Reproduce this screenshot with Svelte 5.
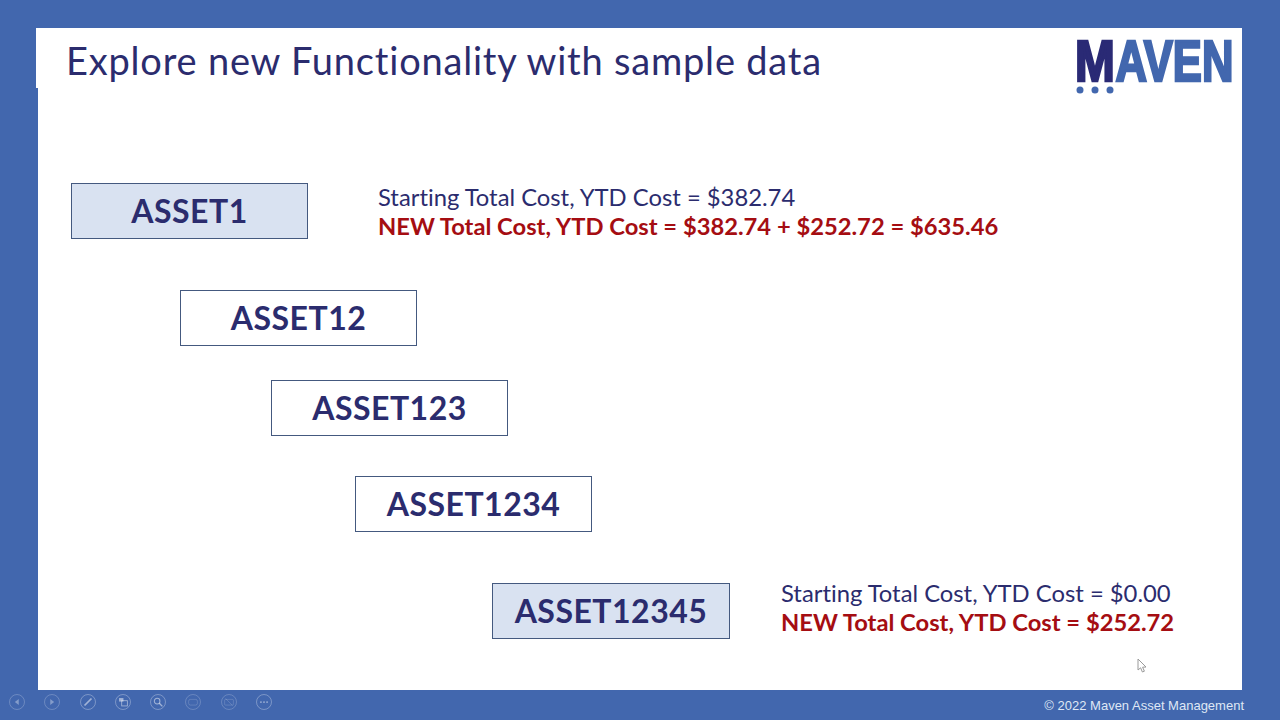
<script>
	const assets = [
		{ name: 'ASSET1', cls: 'first', filled: true, start: 'Starting Total Cost, YTD Cost = $382.74', next: 'NEW Total Cost, YTD Cost = $382.74 + $252.72 = $635.46' },
		{ name: 'ASSET12', cls: 'second' },
		{ name: 'ASSET123', cls: 'third' },
		{ name: 'ASSET1234', cls: 'fourth' },
		{ name: 'ASSET12345', cls: 'fifth', filled: true, start: 'Starting Total Cost, YTD Cost = $0.00', next: 'NEW Total Cost, YTD Cost = $252.72' }
	]
</script>

<main class="page">
	<section class="slide">
		<header class="head">
			<h1>Explore new Functionality with sample data</h1>
			<svg class="logo" viewBox="0 0 158 80" width="158" height="80" role="img" aria-label="Maven">
				<text class="logo-m" transform="translate(-1 63.7) scale(0.84 1)">M</text>
				<text class="logo-rest" transform="translate(39.5 63.7) scale(0.765 1)">AVEN</text>
				<circle cx="4" cy="73" r="3.5" />
				<circle cx="19" cy="73" r="3.5" />
				<circle cx="34" cy="73" r="3.5" />
			</svg>
		</header>

		<div class="rows">
			{#each assets as a}
				<div class="row {a.cls}">
					<div class="box" class:filled={a.filled}>{a.name}</div>
					{#if a.start}
						<div class="notes">
							<p>{a.start}</p>
							<p class="new">{a.next}</p>
						</div>
					{/if}
				</div>
			{/each}
		</div>

		<svg class="cursor" width="12" height="16" viewBox="0 0 12 16">
			<path d="M1 1 L1 12 L3.6 9.8 L5.4 14 L7.4 13.2 L5.6 9.2 L9 9 Z" fill="#fff" stroke="#9a9a9a" />
		</svg>
	</section>

	<footer class="foot">
		<div class="tools">
			<span class="tool dim"><svg viewBox="0 0 16 16"><path d="M10 4.5 L5.5 8 L10 11.5 Z" fill="currentColor" /></svg></span>
			<span class="tool dim"><svg viewBox="0 0 16 16"><path d="M6 4.5 L10.5 8 L6 11.5 Z" fill="currentColor" /></svg></span>
			<span class="tool"><svg viewBox="0 0 16 16"><path d="M4 12 L12 4" stroke="currentColor" stroke-width="2" /></svg></span>
			<span class="tool"><svg viewBox="0 0 16 16"><rect x="3.5" y="3.5" width="5" height="4" fill="currentColor" /><rect x="6.5" y="6.5" width="6.5" height="6" fill="none" stroke="currentColor" /></svg></span>
			<span class="tool"><svg viewBox="0 0 16 16"><circle cx="7" cy="7" r="3.2" fill="none" stroke="currentColor" stroke-width="1.2" /><path d="M9.5 9.5 L13 13" stroke="currentColor" stroke-width="1.6" /></svg></span>
			<span class="tool faint"><svg viewBox="0 0 16 16"><rect x="3" y="5" width="10" height="6.5" rx="2" fill="none" stroke="currentColor" /></svg></span>
			<span class="tool faint"><svg viewBox="0 0 16 16"><rect x="3" y="5" width="10" height="6.5" rx="1" fill="none" stroke="currentColor" /><path d="M4 4 L12 12" stroke="currentColor" /></svg></span>
			<span class="tool"><svg viewBox="0 0 16 16"><circle cx="4.5" cy="8" r="1" fill="currentColor" /><circle cx="8" cy="8" r="1" fill="currentColor" /><circle cx="11.5" cy="8" r="1" fill="currentColor" /></svg></span>
		</div>
		<div class="copy">© 2022 Maven Asset Management</div>
	</footer>
</main>

<style>
	:global(body) {
		margin: 0;
		background: #4267ae;
	}

	.page {
		width: 1280px;
		height: 720px;
		box-sizing: border-box;
		padding-top: 28px;
		display: flex;
		flex-direction: column;
		overflow: hidden;
		background: #4267ae;
		font-family: Lato, "Liberation Sans", sans-serif;
		font-variant-ligatures: none;
	}

	.slide {
		position: relative;
		box-sizing: border-box;
		width: 1204px;
		height: 662px;
		margin-left: 38px;
		background: #fff;
	}

	.head {
		display: flex;
		justify-content: space-between;
		height: 60px;
		margin-left: -2px;
		background: #fff;
		padding-left: 30px;
		padding-right: 8px;
	}

	h1 {
		margin: 0;
		padding-top: 10px;
		font-size: 38px;
		font-weight: 400;
		line-height: 44px;
		color: #2b2c6e;
		letter-spacing: 0.8px;
	}

	.logo {
		margin-top: -11px;
	}

	.logo text {
		font-family: "Liberation Sans", sans-serif;
		font-weight: 700;
		font-size: 57px;
		stroke-width: 2.6px;
	}

	.logo-m {
		fill: #2a2a75;
		stroke: #2a2a75;
	}

	.logo-rest {
		fill: #4267ae;
		stroke: #4267ae;
	}

	.logo circle {
		fill: #4267ae;
	}

	.rows {
		padding-top: 95px;
		display: flex;
		flex-direction: column;
	}

	.row {
		display: flex;
		align-items: center;
		gap: 70px;
		height: 56px;
	}

	.first { margin-left: 33px; }
	.second { margin-left: 142px; margin-top: 51px; }
	.third { margin-left: 233px; margin-top: 34px; }
	.fourth { margin-left: 317px; margin-top: 40px; }
	.fifth { margin-left: 454px; margin-top: 51px; gap: 51px; }

	.first .notes {
		margin-top: 1px;
	}

	.fifth .notes {
		margin-bottom: 7px;
	}

	.fifth .box {
		width: 238px;
	}

	.box {
		box-sizing: border-box;
		width: 237px;
		height: 56px;
		padding-bottom: 1px;
		display: flex;
		align-items: center;
		justify-content: center;
		border: 1px solid #44597f;
		font-size: 32px;
		font-weight: 700;
		color: #2b2c6e;
		letter-spacing: 0.5px;
	}

	.filled {
		background: #d9e2f1;
	}

	.notes {
		display: flex;
		flex-direction: column;
	}

	.notes p {
		margin: 0;
		font-size: 23.8px;
		line-height: 29px;
		color: #2b2c6e;
		white-space: nowrap;
	}

	.notes .new {
		font-size: 23.74px;
		font-weight: 700;
		color: #a50d12;
	}

	.cursor {
		position: absolute;
		left: 1099px;
		top: 630px;
	}

	.foot {
		flex: 1;
		display: flex;
		justify-content: space-between;
		align-items: center;
		padding: 0 36px 0 9px;
	}

	.tools {
		display: flex;
		gap: 19.3px;
		margin-bottom: 6px;
	}

	.tool {
		box-sizing: border-box;
		width: 16px;
		height: 16px;
		border: 1px solid rgba(255, 255, 255, 0.3);
		border-radius: 50%;
		color: rgba(255, 255, 255, 0.5);
		display: block;
	}

	.tool svg {
		display: block;
		width: 14px;
		height: 14px;
	}

	.tool.dim {
		color: rgba(255, 255, 255, 0.35);
		border-color: rgba(255, 255, 255, 0.22);
	}

	.tool.faint {
		color: rgba(255, 255, 255, 0.18);
		border-color: rgba(255, 255, 255, 0.2);
	}

	.copy {
		font-family: "Liberation Sans", sans-serif;
		font-size: 13px;
		color: #dfe7f5;
	}
</style>
